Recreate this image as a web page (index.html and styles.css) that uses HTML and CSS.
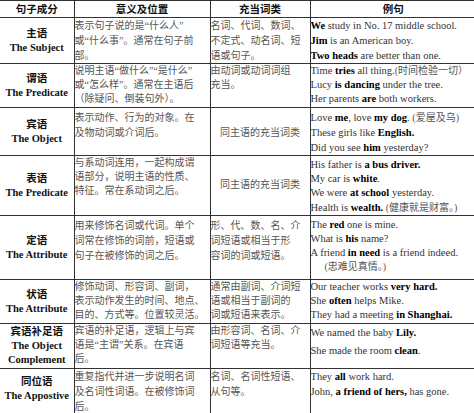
FILE: index.html
```html
<!DOCTYPE html>
<html lang="zh">
<head>
<meta charset="utf-8">
<link rel="stylesheet" href="styles.css">
</head>
<body>
<table class="grammar">
  <colgroup>
    <col class="c1"><col class="c2"><col class="c3"><col class="c4">
  </colgroup>
  <thead>
    <tr class="head">
      <th>句子成分</th><th>意义及位置</th><th>充当词类</th><th>例句</th>
    </tr>
  </thead>
  <tbody>
    <tr class="r1 roomy">
      <td class="term"><span class="zh">主语</span><br>The Subject</td>
      <td class="desc">表示句子说的是“什么人”<br>或“什么事”。通常在句子前<br>部。</td>
      <td class="desc">名词、代词、数词、<br>不定式、动名词、短<br>语或句子。</td>
      <td class="ex"><b>We</b> study in No. 17 middle school.<br><b>Jim</b> is an American boy.<br><b>Two heads</b> are better than one.</td>
    </tr>
    <tr class="r2">
      <td class="term"><span class="zh">谓语</span><br>The Predicate</td>
      <td class="desc">说明主语“做什么”“是什么”<br>或“怎么样”。通常在主语后<br>（除疑问、倒装句外）。</td>
      <td class="desc">由动词或动词词组<br>充当。</td>
      <td class="ex">Time <b>tries</b> all thing.<span class="cn">(时间检验一切）</span><br>Lucy <b>is dancing</b> under the tree.<br>Her parents <b>are</b> both workers.</td>
    </tr>
    <tr class="r3 roomy">
      <td class="term"><span class="zh">宾语</span><br>The Object</td>
      <td class="desc">表示动作、行为的对象。在<br>及物动词或介词后。</td>
      <td class="desc mid">同主语的充当词类</td>
      <td class="ex">Love <b>me</b>, love <b>my dog</b>. <span class="cn">(爱屋及乌)</span><br>These girls like <b>English.</b><br>Did you see <b>him</b> yesterday?</td>
    </tr>
    <tr class="r4">
      <td class="term"><span class="zh">表语</span><br>The Predicate</td>
      <td class="desc">与系动词连用，一起构成谓<br>语部分，说明主语的性质、<br>特征。常在系动词之后。</td>
      <td class="desc mid">同主语的充当词类</td>
      <td class="ex tight">His father is <b>a bus driver.</b><br>My car is <b>white</b>.<br>We were <b>at school</b> yesterday.<br>Health is <b>wealth.</b> <span class="cn">(健康就是财富。)</span></td>
    </tr>
    <tr class="r5 roomy">
      <td class="term"><span class="zh">定语</span><br>The Attribute</td>
      <td class="desc">用来修饰名词或代词。单个<br>词常在修饰的词前，短语或<br>句子在被修饰的词之后。</td>
      <td class="desc">形、代、数、名、介<br>词短语或相当于形<br>容词的词或短语。</td>
      <td class="ex tight">The <b>red</b> one is mine.<br>What is <b>his</b> name?<br>A friend <b>in need</b> is a friend indeed.<br><span class="indent cn">(忠难见真情。)</span></td>
    </tr>
    <tr class="r6">
      <td class="term"><span class="zh">状语</span><br>The Attribute</td>
      <td class="desc">修饰动词、形容词、副词，<br>表示动作发生的时间、地点、<br>目的、方式等。位置较灵活。</td>
      <td class="desc">通常由副词、介词短<br>语或相当于副词的<br>词或短语来表示。</td>
      <td class="ex">Our teacher works <b>very hard.</b><br>She <b>often</b> helps Mike.<br>They had a meeting <b>in Shanghai.</b></td>
    </tr>
    <tr class="r7">
      <td class="term"><span class="zh">宾语补足语</span><br>The Object<br>Complement</td>
      <td class="desc">宾语的补足语，逻辑上与宾<br>语是“主谓”关系。在宾语<br>后。</td>
      <td class="desc">由形容词、名词、介<br>词短语等充当。</td>
      <td class="ex loose">We named the baby <b>Lily.</b><br>She made the room <b>clean</b>.</td>
    </tr>
    <tr class="r8 roomy">
      <td class="term top"><span class="zh">同位语</span><br>The Appostive</td>
      <td class="desc">重复指代并进一步说明名词<br>及名词性词语。在被修饰词<br>后。</td>
      <td class="desc">名词、名词性短语、<br>从句等。</td>
      <td class="ex">They <b>all</b> work hard.<br>John, <b>a friend of hers,</b> has gone.</td>
    </tr>
  </tbody>
</table>
</body>
</html>
```
FILE: styles.css
```css
html, body {
  margin: 0;
  padding: 0;
  background: #fff;
}

.grammar {
  border-collapse: collapse;
  table-layout: fixed;
  width: 476px;
  font-family: "Liberation Serif", "Noto Sans CJK SC", serif;
  font-size: 10px;
  color: #222;
}

.c1 { width: 74px; }
.c2 { width: 136px; }
.c3 { width: 100px; }
.c4 { width: 166px; }

.grammar th,
.grammar td {
  border: 1px solid #333;
  padding: 0;
  white-space: nowrap;
  overflow: hidden;
}

.grammar th:first-child,
.grammar td:first-child { border-left: none; }

.grammar th:last-child,
.grammar td:last-child { border-right: none; }

.head { height: 17px; }
.head th {
  font-family: "Noto Sans CJK SC", sans-serif;
  font-weight: 700;
  font-size: 10.5px;
  line-height: 14px;
  color: #111;
  text-align: center;
  vertical-align: middle;
}

.r1 { height: 46px; }
.r2 { height: 44px; }
.r3 { height: 47px; }
.r4 { height: 58px; }
.r5 { height: 64px; }
.r6 { height: 44px; }
.r7 { height: 45px; }
.r8 { height: 52px; }

.term {
  text-align: center;
  vertical-align: middle;
  font-weight: 700;
  font-size: 10.5px;
  line-height: 14px;
  color: #111;
}
.term.top {
  vertical-align: top;
  padding-top: 5px;
}
.term .zh {
  font-family: "Noto Sans CJK SC", sans-serif;
  font-size: 10.5px;
}

.desc {
  vertical-align: top;
  padding: 0 3px 0 7px;
  line-height: 14.2px;
  color: #555;
}
.desc.mid {
  vertical-align: middle;
  text-align: center;
  padding: 0;
}

.ex {
  vertical-align: top;
  padding: 0 2px 0 6px;
  font-size: 10.5px;
  line-height: 14.2px;
  color: #333;
}
.ex .cn {
  font-size: 10px;
  color: #555;
}
.roomy .desc,
.roomy .ex { line-height: 15px; }
.r3 .desc,
.r3 .ex,
.r5 .desc { padding-top: 2px; }
.roomy .ex.tight,
.ex.tight { line-height: 14.2px; padding-top: 2px; }
.ex.loose { line-height: 18px; padding-top: 0; }
.ex b {
  color: #000;
  font-weight: 700;
}
.indent {
  padding-left: 14px;
}
```
